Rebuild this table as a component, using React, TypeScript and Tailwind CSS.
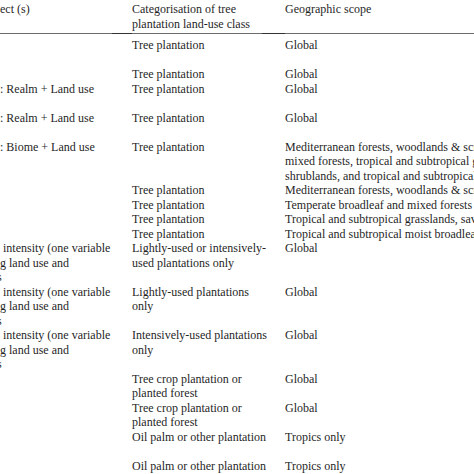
const SERIF = "'Liberation Serif','Times New Roman',serif"

type Row = {
  h: string
  effect: string[]
  category: string[]
  scope: string[]
  frag?: boolean
}

const INTENSITY = [' intensity (one variable', 'g land use and']

const ROWS: Row[] = [
  { h: 'h-[29px]',   effect: [],                        category: ['Tree plantation'], scope: ['Global'] },
  { h: 'h-[14.5px]', effect: [],                        category: ['Tree plantation'], scope: ['Global'] },
  { h: 'h-[29px]',   effect: [': Realm + Land use'],    category: ['Tree plantation'], scope: ['Global'] },
  { h: 'h-[29px]',   effect: [': Realm + Land use'],    category: ['Tree plantation'], scope: ['Global'] },
  { h: 'h-[43.5px]', effect: [': Biome + Land use'],    category: ['Tree plantation'], scope: [
    'Mediterranean forests, woodlands & scrub; temperate broadleaf and',
    'mixed forests, tropical and subtropical grasslands, savannas and',
    'shrublands, and tropical and subtropical moist broadleaf forests',
  ] },
  { h: 'h-[14.5px]', effect: [], category: ['Tree plantation'], scope: ['Mediterranean forests, woodlands & scrub'] },
  { h: 'h-[14.5px]', effect: [], category: ['Tree plantation'], scope: ['Temperate broadleaf and mixed forests'] },
  { h: 'h-[14.5px]', effect: [], category: ['Tree plantation'], scope: ['Tropical and subtropical grasslands, savannas & shrublands'] },
  { h: 'h-[14.5px]', effect: [], category: ['Tree plantation'], scope: ['Tropical and subtropical moist broadleaf forests'] },
  { h: 'h-[43.5px]', effect: INTENSITY, frag: true, category: ['Lightly-used or intensively-', 'used plantations only'], scope: ['Global'] },
  { h: 'h-[43.5px]', effect: INTENSITY, frag: true, category: ['Lightly-used plantations', 'only'], scope: ['Global'] },
  { h: 'h-[43.5px]', effect: INTENSITY, frag: true, category: ['Intensively-used plantations', 'only'], scope: ['Global'] },
  { h: 'h-[29px]',   effect: [], category: ['Tree crop plantation or', 'planted forest'], scope: ['Global'] },
  { h: 'h-[29px]',   effect: [], category: ['Tree crop plantation or', 'planted forest'], scope: ['Global'] },
  { h: 'h-[29px]',   effect: [], category: ['Oil palm or other plantation'], scope: ['Tropics only'] },
  { h: 'h-[29px]',   effect: [], category: ['Oil palm or other plantation'], scope: ['Tropics only'] },
]

function Lines({ items }: { items: string[] }) {
  return (
    <>
      {items.map((t, i) => (
        <div key={i} className="whitespace-pre">{t}</div>
      ))}
    </>
  )
}

export default function App() {
  return (
    <div className="w-[474px] h-[474px] overflow-hidden bg-white text-[#1f1f1f] text-[12px]"
      style={{ fontFamily: SERIF }}>

      {/* Header */}
      <div className="grid grid-cols-[132px_153px_1fr] pt-[1.5px] leading-[15px] h-[32px]">
        <div className="whitespace-pre">ect (s)</div>
        <div className="whitespace-nowrap">
          <div>Categorisation of tree</div>
          <div>plantation land-use class</div>
        </div>
        <div className="whitespace-nowrap">Geographic scope</div>
      </div>

      {/* Header rule */}
      <div className="flex h-[1px] mt-[1px]">
        <div className="w-[112px] bg-[#6b6b6b]" />
        <div className="w-[20px] bg-[#333]" />
        <div className="w-[130px] bg-[#6b6b6b]" />
        <div className="w-[23px] bg-[#333]" />
        <div className="flex-1 bg-[#6b6b6b]" />
      </div>

      {/* Body */}
      <div className="pt-[4px] leading-[14.5px]">
        {ROWS.map((r, i) => (
          <div key={i} className={`grid grid-cols-[132px_153px_1fr] ${r.h}`}>
            <div className="overflow-hidden">
              <Lines items={r.effect} />
              {r.frag && (
                <div className="h-[14.5px] overflow-hidden">
                  <span className="inline-block -ml-[3px]">s</span>
                </div>
              )}
            </div>
            <div className="whitespace-nowrap"><Lines items={r.category} /></div>
            <div className="whitespace-nowrap"><Lines items={r.scope} /></div>
          </div>
        ))}
      </div>
    </div>
  )
}
